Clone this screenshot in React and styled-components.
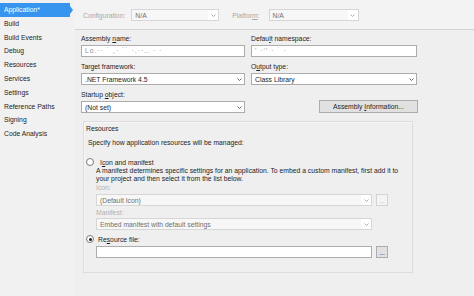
import React from 'react';
import styled, { createGlobalStyle } from 'styled-components';

const Global = createGlobalStyle`
  html, body { margin: 0; padding: 0; background: #efefef; }
  body {
    font-family: "Liberation Sans", Arial, sans-serif;
    font-size: 6.8px;
    color: #1e1e1e;
  }
  #root { width: 474px; height: 296px; overflow: hidden; }
  * { box-sizing: border-box; }
`;

const Window = styled.div`
  display: flex;
  width: 474px;
  height: 296px;
  background: #efefef;
`;

const Sidebar = styled.nav`
  width: 75px;
  flex: none;
  padding-top: 3px;
  display: flex;
  flex-direction: column;
  background: #f1f1f1;
`;

const NavItem = styled.div`
  position: relative;
  width: 70px;
  height: 13.8px;
  line-height: 13.8px;
  padding-left: 4px;
  white-space: nowrap;
  color: ${p => (p.$active ? '#ffffff' : '#1e1e1e')};
  background: ${p => (p.$active ? '#3794ef' : 'transparent')};
  &::after {
    content: '';
    display: ${p => (p.$active ? 'block' : 'none')};
    position: absolute;
    left: 100%;
    top: 50%;
    transform: translateY(-50%);
    border-left: 3px solid #3794ef;
    border-top: 4px solid transparent;
    border-bottom: 4px solid transparent;
  }
`;

const Main = styled.main`
  flex: 1;
  display: flex;
  flex-direction: column;
  min-width: 0;
`;

const TopBar = styled.div`
  height: 30px;
  flex: none;
  display: flex;
  align-items: center;
  padding: 1px 0 0 8px;
  border-bottom: 1px solid #d2d2d2;
  background: #f3f3f3;
`;

const DimLabel = styled.span`
  color: #a8a8a8;
  margin-right: ${p => p.$gap || 6}px;
  white-space: nowrap;
`;

const Combo = styled.div`
  display: flex;
  align-items: center;
  justify-content: space-between;
  width: ${p => p.$w}px;
  height: 12px;
  margin-right: ${p => p.$mr || 0}px;
  padding-left: 3px;
  border: 1px solid ${p => (p.$disabled ? '#d6d6d6' : '#acacac')};
  background: ${p => (p.$disabled ? '#f7f7f7' : '#ffffff')};
  color: ${p => (p.$disabled ? '#707070' : '#1e1e1e')};
  white-space: nowrap;
  overflow: hidden;
`;

const ArrowBox = styled.span`
  display: flex;
  align-items: center;
  justify-content: center;
  width: 10px;
  height: 100%;
  background: ${p => (p.$disabled ? '#ffffff' : 'transparent')};
`;

const TextBox = styled.div`
  width: ${p => (p.$w ? `${p.$w}px` : '100%')};
  height: 12px;
  padding-left: 3px;
  line-height: 10px;
  border: 1px solid #acacac;
  background: #ffffff;
  color: #8a8a8a;
  white-space: nowrap;
  overflow: hidden;
  letter-spacing: 1px;
`;

const Form = styled.div`
  display: grid;
  grid-template-columns: 164px 166px;
  column-gap: 6px;
  row-gap: 5px;
  padding: 4px 0 0 6px;
`;

const Field = styled.div`
  display: flex;
  flex-direction: column;
`;

const Label = styled.div`
  height: 10px;
  line-height: 10px;
  margin-bottom: 1px;
  color: #1e1e1e;
  white-space: nowrap;
`;

const Button = styled.div`
  display: flex;
  align-items: center;
  justify-content: center;
  width: ${p => p.$w}px;
  height: ${p => p.$h}px;
  border: 1px solid ${p => (p.$disabled ? '#d3d3d3' : '#adadad')};
  background: ${p => (p.$disabled ? '#f4f4f4' : '#e1e1e1')};
  color: ${p => (p.$disabled ? '#b0b0b0' : '#1e1e1e')};
  white-space: nowrap;
  flex: none;
`;

const InfoButton = styled(Button)`
  align-self: end;
  justify-self: end;
  margin-right: -1px;
`;

const Group = styled.fieldset`
  margin: 8px 0 0 8px;
  width: 330px;
  height: 152px;
  padding: 2px 0 0 2px;
  border: 1px solid #dcdcdc;
  box-shadow: inset 1px 1px 0 #f7f7f7;
  display: flex;
  flex-direction: column;
`;

const GroupTitle = styled.div`
  line-height: 10px;
  height: 10px;
`;

const Hint = styled.div`
  line-height: 10px;
  height: 10px;
  margin: 4px 0 0 2px;
`;

const RadioRow = styled.div`
  display: flex;
  align-items: center;
  height: 10px;
  margin-top: ${p => p.$mt}px;
`;

const RadioCircle = styled.span`
  position: relative;
  width: 8px;
  height: 8px;
  border-radius: 50%;
  border: 1px solid #7a7a7a;
  background: #ffffff;
  margin-right: ${p => p.$gap}px;
  flex: none;
  &::after {
    content: '';
    display: ${p => (p.$checked ? 'block' : 'none')};
    position: absolute;
    left: 1.5px;
    top: 1.5px;
    width: 3px;
    height: 3px;
    border-radius: 50%;
    background: #1e1e1e;
  }
`;

const Indent = styled.div`
  margin-left: 10px;
  display: flex;
  flex-direction: column;
`;

const Desc = styled.div`
  line-height: 8px;
  white-space: nowrap;
`;

const SubLabel = styled.div`
  line-height: 8px;
  height: 8px;
  color: #b2b2b2;
  margin-top: ${p => p.$mt}px;
`;

const PickRow = styled.div`
  display: flex;
  gap: 4px;
  margin-top: ${p => p.$mt}px;
`;

const U = styled.span`
  text-decoration: underline;
`;

const Chevron = ({ dim }) => (
  <svg width="5" height="3" viewBox="0 0 5 3">
    <polyline points="0.5,0.5 2.5,2.5 4.5,0.5" fill="none" stroke={dim ? '#9a9a9a' : '#444'} strokeWidth="0.8" />
  </svg>
);

const Select = ({ w, disabled, children, mr }) => (
  <Combo $w={w} $disabled={disabled} $mr={mr}>
    <span>{children}</span>
    <ArrowBox $disabled={disabled}>
      <Chevron dim={disabled} />
    </ArrowBox>
  </Combo>
);

const navItems = [
  'Application*', 'Build', 'Build Events', 'Debug', 'Resources', 'Services',
  'Settings', 'Reference Paths', 'Signing', 'Code Analysis',
];

export default function App() {
  return (
    <>
      <Global />
      <Window>
        <Sidebar>
          {navItems.map((n, i) => (
            <NavItem key={n} $active={i === 0}>{n}</NavItem>
          ))}
        </Sidebar>
        <Main>
          <TopBar>
            <DimLabel $gap={6}>Configuration:</DimLabel>
            <Select w={88} disabled mr={13}>N/A</Select>
            <DimLabel $gap={9}>Platfor<U>m</U>:</DimLabel>
            <Select w={90} disabled>N/A</Select>
          </TopBar>
          <Form>
            <Field>
              <Label>Assembly <U>n</U>ame:</Label>
              <TextBox>Lo.··  ˙ ,· ˙˙ ·.··.. ·  ·</TextBox>
            </Field>
            <Field>
              <Label>Defau<U>l</U>t namespace:</Label>
              <TextBox>'          ·‘'         ·    ˙  ·</TextBox>
            </Field>
            <Field>
              <Label>Target framework:</Label>
              <Select w={164}>.NET Framework 4.5</Select>
            </Field>
            <Field>
              <Label>O<U>u</U>tput type:</Label>
              <Select w={166}>Class Library</Select>
            </Field>
            <Field>
              <Label>Startup <U>o</U>bject:</Label>
              <Select w={164}>(Not set)</Select>
            </Field>
            <InfoButton $w={99} $h={13}>
              <span>Assembly <U>I</U>nformation...</span>
            </InfoButton>
          </Form>
          <Group>
            <GroupTitle>Resources</GroupTitle>
            <Hint>Specify how application resources will be managed:</Hint>
            <RadioRow $mt={9}>
              <RadioCircle $gap={6} />
              <span>I<U>c</U>on and manifest</span>
            </RadioRow>
            <Indent>
              <Desc>A manifest determines specific settings for an application. To embed a custom manifest, first add it to</Desc>
              <Desc>your project and then select it from the list below.</Desc>
              <SubLabel $mt={1}>Icon:</SubLabel>
              <PickRow $mt={2}>
                <Select w={276} disabled>(Default Icon)</Select>
                <Button $w={12} $h={12} $disabled>...</Button>
              </PickRow>
              <SubLabel $mt={3}>Manifest:</SubLabel>
              <PickRow $mt={1}>
                <Select w={276} disabled>Embed manifest with default settings</Select>
              </PickRow>
            </Indent>
            <RadioRow $mt={4}>
              <RadioCircle $gap={4} $checked />
              <span>Re<U>s</U>ource file:</span>
            </RadioRow>
            <Indent>
              <PickRow $mt={2}>
                <TextBox $w={276} />
                <Button $w={12} $h={12}>...</Button>
              </PickRow>
            </Indent>
          </Group>
        </Main>
      </Window>
    </>
  );
}
